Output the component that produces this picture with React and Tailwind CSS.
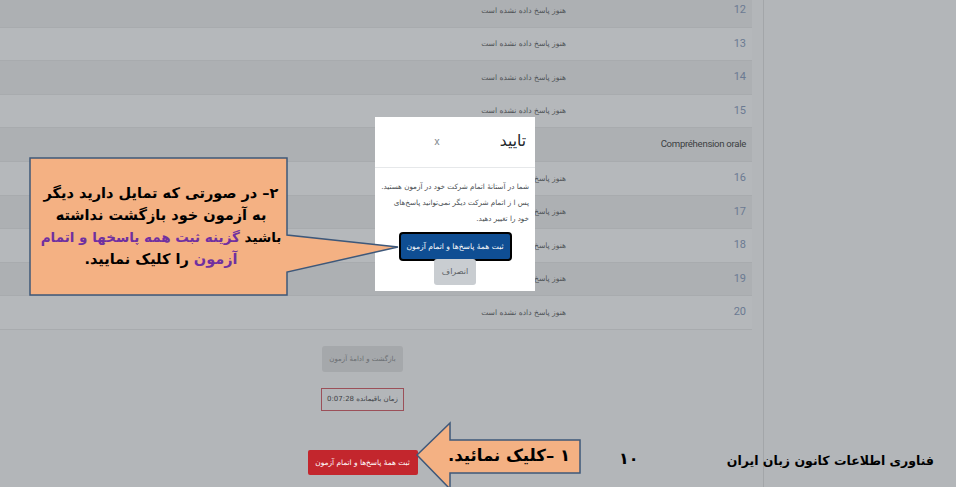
import React from 'react';

const fa = { fontFamily: '"DejaVu Sans", "Noto Sans", sans-serif' };
const latin = { fontFamily: 'Roboto, "Liberation Sans", sans-serif' };

const rows = [
  { n: '12' },
  { n: '13' },
  { n: '14' },
  { n: '15' },
  { header: 'Compréhension orale' },
  { n: '16' },
  { n: '17' },
  { n: '18' },
  { n: '19' },
  { n: '20' },
];

const StatusRow = ({ row, dark }) => (
  <div
    dir="rtl"
    className={`flex items-center h-[33.6px] border-b border-[#a8abae] ${dark ? 'bg-[#adb0b3]' : 'bg-[#b5b8bb]'}`}
  >
    {row.header ? (
      <div className="pr-[6px] text-[9.6px] text-[#3c3f42] tracking-[-0.3px] whitespace-nowrap" style={latin}>
        {row.header}
      </div>
    ) : (
      <>
        <div className="w-[186px] shrink-0 pr-[6px] text-[11px] text-[#6b7a92]" style={latin}>
          {row.n}
        </div>
        <div className="text-[7.6px] text-[#505458] whitespace-nowrap" style={fa}>
          هنوز پاسخ داده نشده است
        </div>
      </>
    )}
  </div>
);

const ConfirmModal = () => (
  <div dir="rtl" className="absolute left-[375px] top-[117px] w-[160px] h-[174px] bg-white flex flex-col" style={fa}>
    <div className="shrink-0 h-[51px] flex items-center pr-[9px] border-b border-[#e6e8ea]">
      <span className="text-[15.5px] text-[#212529]">تایید</span>
      <span className="mr-[60px] text-[11px] text-[#8a8f94]" style={latin}>x</span>
    </div>
    <div className="pt-[11px] pr-[6px] pl-[2px] text-[7.2px] leading-[16px] text-[#4a4f54] whitespace-nowrap">
      <p>شما در آستانهٔ اتمام شرکت خود در آزمون هستید.</p>
      <p>پس ا ز اتمام شرکت دیگر نمی‌توانید پاسخ‌های</p>
      <p>خود را تغییر دهید.</p>
    </div>
    <div className="flex flex-col items-center mt-[5px]">
      <div className="bg-black rounded-[4px] p-[2px]">
        <div className="bg-[#0f4e93] rounded-[2px] h-[25px] w-[109px] flex items-center justify-center text-white text-[7.6px] whitespace-nowrap">
          ثبت همهٔ پاسخ‌ها و اتمام آزمون
        </div>
      </div>
      <div className="-mt-[2px] bg-[#c9cdd1] rounded-[3px] h-[26px] w-[42px] flex items-center justify-center text-[#5b6064] text-[8px]">
        انصراف
      </div>
    </div>
  </div>
);

const CalloutLeft = () => (
  <div className="absolute left-[28px] top-[156px] w-[374px] h-[142px]">
    <svg width="374" height="142" className="absolute inset-0">
      <path
        d="M2 2 H259 V79 L370 91 L259 116 V139 H2 Z"
        fill="#f4b183"
        stroke="#3e587a"
        strokeWidth="1.5"
      />
    </svg>
    <div
      dir="rtl"
      className="relative w-[266px] pt-[26px] text-center font-bold text-[14.5px] leading-[22px] text-black whitespace-nowrap"
      style={fa}
    >
      <p>۲– در صورتی که تمایل دارید دیگر</p>
      <p>به آزمون خود بازگشت نداشته</p>
      <p className="text-[13.5px]">
        باشید <span className="text-[#7030a0]">گزینه ثبت همه پاسخها و اتمام</span>
      </p>
      <p>
        <span className="text-[#7030a0]">آزمون</span> را کلیک نمایید.
      </p>
    </div>
  </div>
);

const CalloutArrow = () => (
  <div className="absolute left-[415px] top-[421px] w-[168px] h-[70px]">
    <svg width="168" height="70" className="absolute inset-0">
      <path
        d="M2 34 L35 2 V19 H165 V52 H35 V68 Z"
        fill="#f4b183"
        stroke="#3e587a"
        strokeWidth="1.5"
      />
    </svg>
    <div
      dir="rtl"
      className="absolute left-[26px] top-[19px] w-[136px] h-[32px] flex items-center justify-center font-bold text-[16.5px] text-black whitespace-nowrap"
      style={fa}
    >
      ۱ –کلیک نمائید.
    </div>
  </div>
);

export default function App() {
  return (
    <div className="relative w-[956px] h-[487px] overflow-hidden bg-[#b3b6b9] flex">
      <div className="w-[764px] shrink-0 border-r border-[#a3a6a9]">
        <div className="w-[752px] -mt-[6px]">
          {rows.map((row, i) => (
            <StatusRow key={i} row={row} dark={i % 2 === 0} />
          ))}
        </div>
        <div dir="rtl" className="w-[725px] flex flex-col items-center whitespace-nowrap" style={fa}>
          <div className="mt-[16px] h-[26px] px-[7px] rounded-[3px] bg-[#a5a8ab] flex items-center text-[7px] text-[#6a6e72]">
            بازگشت و ادامهٔ آزمون
          </div>
          <div className="mt-[16px] h-[23px] px-[5px] border border-[#9b5059] flex items-center text-[7px] text-[#3d4145]">
            زمان باقیمانده 0:07:28
          </div>
          <div className="mt-[39px] h-[25px] w-[110px] rounded-[2px] bg-[#c3262d] flex items-center justify-center text-[7.4px] text-white">
            ثبت همهٔ پاسخ‌ها و اتمام آزمون
          </div>
        </div>
      </div>
      <div className="flex-1" />

      <ConfirmModal />
      <CalloutLeft />
      <CalloutArrow />

      <div className="absolute left-[619px] top-[447px] font-bold text-[16px] text-black" style={fa}>
        ۱۰
      </div>
      <div dir="rtl" className="absolute right-[22px] top-[452px] font-bold text-[12.5px] text-black whitespace-nowrap" style={fa}>
        فناوری اطلاعات کانون زبان ایران
      </div>
    </div>
  );
}
